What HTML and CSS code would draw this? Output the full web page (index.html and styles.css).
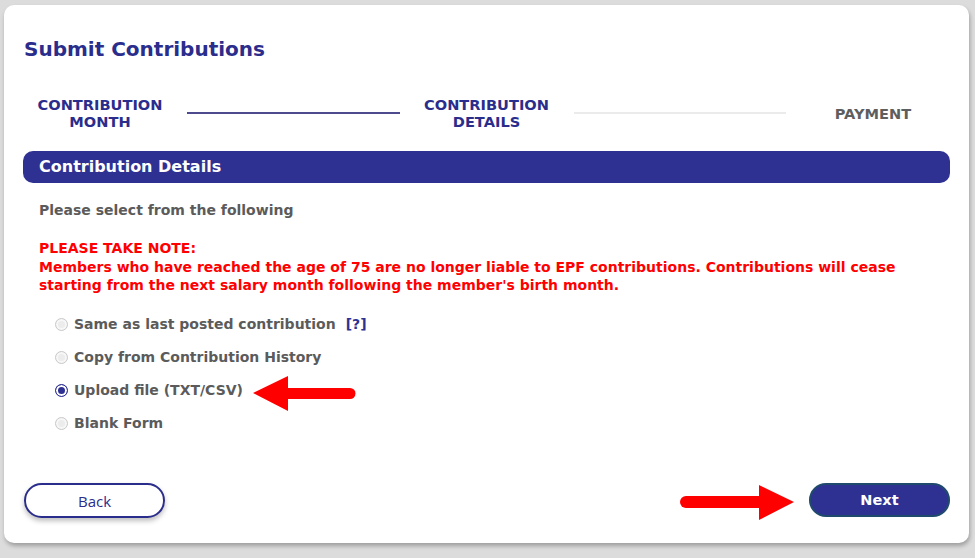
FILE: index.html
```html
<!DOCTYPE html>
<html lang="en">
<head>
<meta charset="utf-8">
<title>Submit Contributions</title>
<link rel="stylesheet" href="styles.css">
</head>
<body>
<div class="card">
  <h1 class="title">Submit Contributions</h1>

  <div class="stepper">
    <div class="step done">CONTRIBUTION<br>MONTH</div>
    <div class="connector done"></div>
    <div class="step active">CONTRIBUTION<br>DETAILS</div>
    <div class="connector"></div>
    <div class="step pending">PAYMENT</div>
  </div>

  <div class="section-bar">Contribution Details</div>

  <div class="body">
    <p class="prompt">Please select from the following</p>
    <p class="note">PLEASE TAKE NOTE:<br>Members who have reached the age of 75 are no longer liable to EPF contributions. Contributions will cease starting from the next salary month following the member's birth month.</p>

    <ul class="options">
      <li class="option"><span class="radio"></span><span class="label">Same as last posted contribution</span><span class="help">[?]</span></li>
      <li class="option"><span class="radio"></span><span class="label">Copy from Contribution History</span></li>
      <li class="option"><span class="radio checked"></span><span class="label">Upload file (TXT/CSV)</span></li>
      <li class="option"><span class="radio"></span><span class="label">Blank Form</span></li>
    </ul>
  </div>

  <div class="actions">
    <button class="btn btn-back">Back</button>
    <button class="btn btn-next">Next</button>
  </div>

  <svg class="arrow arrow-left" width="110" height="40" viewBox="0 0 110 40">
    <polygon points="1,18 36,1 36,36" fill="#ff0000"/>
    <path d="M34 18.5 H98" stroke="#ff0000" stroke-width="11" stroke-linecap="round" fill="none"/>
  </svg>
  <svg class="arrow arrow-right" width="120" height="40" viewBox="0 0 120 40">
    <polygon points="115,18 80,1 80,36" fill="#ff0000"/>
    <path d="M7 18 H82" stroke="#ff0000" stroke-width="12" stroke-linecap="round" fill="none"/>
  </svg>
</div>
</body>
</html>
```

FILE: styles.css
```css
* { box-sizing: border-box; }

html, body {
  margin: 0;
  padding: 0;
}

body {
  background: #dcdcdc;
  font-family: "DejaVu Sans", Verdana, sans-serif;
  width: 975px;
  height: 558px;
  overflow: hidden;
  padding: 5px 6px 0 4px;
}

.card {
  position: relative;
  width: 965px;
  height: 538px;
  background: #ffffff;
  border-radius: 10px;
  box-shadow: 1px 3px 4px rgba(0, 0, 0, 0.28);
  padding: 31px 19px 25px 19px;
  display: flex;
  flex-direction: column;
}

.title {
  margin: 0 0 0 1px;
  font-size: 20px;
  line-height: 26px;
  font-weight: bold;
  color: #2b2d8c;
}

.stepper {
  margin-top: 34px;
  display: flex;
  align-items: center;
  gap: 10px;
  height: 34px;
}

.step {
  width: 154px;
  flex: none;
  text-align: center;
  font-size: 14.6px;
  line-height: 17px;
  font-weight: bold;
}

.step.done, .step.active { color: #2b2d8c; }
.step.pending { color: #5e5e5e; }

.connector {
  flex: 1;
  height: 2px;
  background: #ebebeb;
}
.connector.done { background: #4d4b8e; }

.section-bar {
  margin-top: 21px;
  height: 32px;
  background: #2e3192;
  border-radius: 10px;
  color: #ffffff;
  font-size: 16px;
  font-weight: bold;
  line-height: 32px;
  padding-left: 16px;
}

.body {
  padding-left: 16px;
}

.prompt {
  margin: 18px 0 0 0;
  font-size: 14px;
  line-height: 18px;
  font-weight: bold;
  color: #5b5b5b;
}

.note {
  margin: 20px 0 0 0;
  font-size: 14px;
  line-height: 18.5px;
  font-weight: bold;
  color: #ff0000;
}

.options {
  list-style: none;
  margin: 13px 0 0 0;
  padding: 0 0 0 16px;
}

.option {
  height: 33px;
  display: flex;
  align-items: center;
  font-size: 14px;
  font-weight: bold;
  color: #5b5b5b;
}

.radio {
  width: 13px;
  height: 13px;
  border-radius: 50%;
  border: 1px solid #c9c9c9;
  background: #ececec;
  box-shadow: inset 0 0 0 2px #f7f7f7;
  margin-right: 6px;
  flex: none;
}

.radio.checked {
  border: 1.5px solid #2e3192;
  background: #2e3192;
  box-shadow: inset 0 0 0 2px #ffffff;
}

.help {
  color: #2e3192;
  margin-left: 10px;
}

.actions {
  margin-top: auto;
  display: flex;
  justify-content: space-between;
  align-items: center;
}

.btn {
  width: 141px;
  height: 35px;
  border-radius: 18px;
  font-size: 15px;
  cursor: pointer;
}

.btn-back {
  margin-left: 1px;
  background: #ffffff;
  border: 2px solid #2b2d8c;
  color: #2b2d8c;
  font-family: "Open Sans", "Noto Sans", sans-serif;
  box-shadow: 0 3px 5px rgba(0, 0, 0, 0.25);
}

.btn-next {
  height: 34px;
  margin-bottom: 1px;
  background: #2e3192;
  border: 2px solid #1f4a6e;
  color: #ffffff;
  font-family: "DejaVu Sans", Verdana, sans-serif;
  font-size: 14.5px;
  font-weight: bold;
}

.arrow {
  position: absolute;
}
.arrow-left { left: 248px; top: 370px; }
.arrow-right { left: 675px; top: 479px; }
```
